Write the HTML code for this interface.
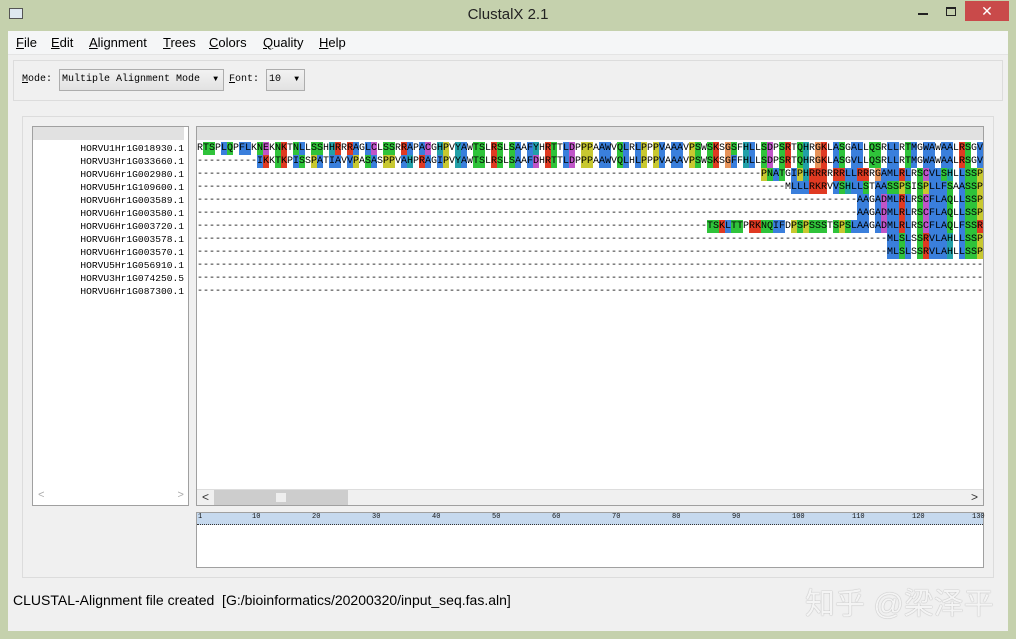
<!DOCTYPE html>
<html><head><meta charset="utf-8"><style>
*{margin:0;padding:0;box-sizing:border-box}
body{width:1016px;height:639px;background:#c5d1ad;position:relative;overflow:hidden;font-family:"Liberation Sans",sans-serif}
.abs{position:absolute}
#title{left:0;top:6px;width:1016px;text-align:center;font-size:15px;color:#222}
#client{left:8px;top:31px;width:1000px;height:600px;background:#f0f0f0}
#menu{left:8px;top:31px;width:1000px;height:24px;background:#f5f6f7;border-bottom:1px solid #e4e4e4;font-size:13px;color:#000}
#menu span{position:absolute;top:4px}
.mono{font-family:"Liberation Mono",monospace}
#grp{left:13px;top:60px;width:990px;height:41px;border:1px solid #dcdcdc;background:#f0f0f0}
.sel{border:1px solid #adadad;background:linear-gradient(#f2f2f2,#e2e2e2);height:22px;font-size:10px;padding:4px 2px;white-space:nowrap}
.arr{position:absolute;right:5px;top:5px;font-size:8px}
#frame{left:22px;top:116px;width:972px;height:462px;border:1px solid #dcdcdc}
.panel{background:#fff;border:1px solid #a0a0a0}
.hdr{position:absolute;left:0;top:0;right:0;height:13px;background:#e1e1e1}
.names div{position:absolute;right:4px;font-size:9.6px;font-family:"Liberation Mono",monospace;color:#000;line-height:13px}
#seq .row{position:absolute;left:0;height:13px;line-height:13px;font-family:"Liberation Mono",monospace;font-size:10px;white-space:pre;letter-spacing:0}
#seq .row span{display:inline-block;width:6px;text-align:center}
.b{background:#3a7fdc}.g{background:#2fc33a}.r{background:#e03a22}.o{background:#e8945a}.y{background:#c8c830}.c{background:#22a0a8}.m{background:#c055c8}
</style></head><body>
<div class="abs" style="left:9px;top:8px;width:14px;height:11px;border:1px solid #555;background:#dfe8f0"></div>
<div id="title" class="abs">ClustalX 2.1</div>
<div class="abs" style="left:918px;top:13px;width:10px;height:2px;background:#222"></div>
<div class="abs" style="left:946px;top:7px;width:10px;height:9px;border:1px solid #222;border-top-width:2px"></div>
<div class="abs" style="left:965px;top:1px;width:44px;height:20px;background:#c94a4a;color:#fff;text-align:center;font-size:14px;line-height:20px">✕</div>
<div id="client" class="abs"></div>
<div id="menu" class="abs">
<span style="left:8px"><u>F</u>ile</span><span style="left:43px"><u>E</u>dit</span><span style="left:81px"><u>A</u>lignment</span><span style="left:155px"><u>T</u>rees</span><span style="left:201px"><u>C</u>olors</span><span style="left:255px"><u>Q</u>uality</span><span style="left:311px"><u>H</u>elp</span>
</div>
<div id="grp" class="abs"></div>
<div class="abs mono" style="left:22px;top:74px;font-size:10px"><u>M</u>ode:</div>
<div class="abs sel mono" style="left:59px;top:69px;width:165px">Multiple Alignment Mode<span class="arr">▼</span></div>
<div class="abs mono" style="left:229px;top:74px;font-size:10px"><u>F</u>ont:</div>
<div class="abs sel mono" style="left:266px;top:69px;width:39px">10<span class="arr">▼</span></div>
<div id="frame" class="abs"></div>
<div class="abs panel names" style="left:32px;top:126px;width:157px;height:380px">
<div class="hdr"></div>
<div style="top:15px">HORVU1Hr1G018930.1</div><div style="top:28px">HORVU3Hr1G033660.1</div><div style="top:41px">HORVU6Hr1G002980.1</div><div style="top:54px">HORVU5Hr1G109600.1</div><div style="top:67px">HORVU6Hr1G003589.1</div><div style="top:80px">HORVU6Hr1G003580.1</div><div style="top:93px">HORVU6Hr1G003720.1</div><div style="top:106px">HORVU6Hr1G003578.1</div><div style="top:119px">HORVU6Hr1G003570.1</div><div style="top:132px">HORVU5Hr1G056910.1</div><div style="top:145px">HORVU3Hr1G074250.5</div><div style="top:158px">HORVU6Hr1G087300.1</div>
<div style="top:363px;left:5px;right:auto;color:#aaa;font-size:11px">&lt;</div><div style="top:363px;right:4px;color:#aaa;font-size:11px">&gt;</div>
</div>
<div class="abs panel" id="seq" style="left:196px;top:126px;width:788px;height:380px;overflow:hidden">
<div class="hdr"></div>
<div class="row" style="top:15px">RTSPLQPFLKNEKNKTNLLSSHHRRRAGLCLSSRRAPACGHPVYAWTSLRSLSAAFYHRTTLDPPPAAWVQLRLPPPVAAAVPSWSKSGSFHLLSDPSRTQHRGKLASGALLQSRLLRTMGWAWAALRSGV</div>
<div class="row" style="top:28px">----------IKKTKPISSPATIAVVPASASPPVAHPRAGIPVYAWTSLRSLSAAFDHRTTLDPPPAAWVQLHLPPPVAAAVPSWSKSGFFHLLSDPSRTQHRGKLASGVLLQSRLLRTMGWAWAALRSGV</div>
<div class="row" style="top:41px">----------------------------------------------------------------------------------------------PNATGIPHRRRRRRLLRRRGAMLRLRSCVLSHLLSSP</div>
<div class="row" style="top:54px">--------------------------------------------------------------------------------------------------MLLLRKRVVSHLLSTAASSPSISPLLFSAASSP</div>
<div class="row" style="top:67px">--------------------------------------------------------------------------------------------------------------AAGADMLRLRSCFLAQLLSSP</div>
<div class="row" style="top:80px">--------------------------------------------------------------------------------------------------------------AAGADMLRLRSCFLAQLLSSP</div>
<div class="row" style="top:93px">-------------------------------------------------------------------------------------TSKLTTPRKNQIFDPSPSSSTSPSLAAGADMLRLRSCFLAQLFSSR</div>
<div class="row" style="top:106px">-------------------------------------------------------------------------------------------------------------------MLSLSSRVLAHLLSSP</div>
<div class="row" style="top:119px">-------------------------------------------------------------------------------------------------------------------MLSLSSRVLAHLLSSP</div>
<div class="row" style="top:132px">-----------------------------------------------------------------------------------------------------------------------------------</div>
<div class="row" style="top:145px">-----------------------------------------------------------------------------------------------------------------------------------</div>
<div class="row" style="top:158px">-----------------------------------------------------------------------------------------------------------------------------------</div>
<div class="abs" style="left:0;top:362px;width:788px;height:17px;background:#f0f0f0;border-top:1px solid #ddd"></div>
<div class="abs" style="left:17px;top:363px;width:134px;height:15px;background:#cdcdcd"></div>
<div class="abs" style="left:79px;top:366px;width:10px;height:9px;background:#eee"></div>
<div class="abs" style="left:5px;top:363px;font-size:12px;color:#333">&lt;</div>
<div class="abs" style="left:774px;top:363px;font-size:12px;color:#333">&gt;</div>
</div>
<div class="abs panel" style="left:196px;top:512px;width:788px;height:56px">
<div class="abs" style="left:0;top:0;width:786px;height:12px;background:#c6d9ee;border-bottom:1px dotted #333"></div>
<div class="abs mono" id="ruler" style="left:0;top:0;font-size:7px;color:#111;white-space:pre"></div>
</div>
<div class="abs" style="left:13px;top:592px;font-size:14px;white-space:nowrap;color:#000">CLUSTAL-Alignment file created&nbsp; [G:/bioinformatics/20200320/input_seq.fas.aln]</div>
<div class="abs" style="left:805px;top:579px;font-size:30px;color:#f4f4f4;text-shadow:0 0 1px #888;font-family:'Liberation Sans','Noto Sans CJK SC',sans-serif;white-space:nowrap">知乎 @梁泽平</div>
<script>
var map={A:'b',I:'b',L:'b',M:'b',F:'b',W:'b',V:'b',K:'r',R:'r',S:'g',T:'g',N:'g',Q:'g',G:'o',P:'y',C:'m',H:'c',Y:'c',D:'m',E:'m'};
document.querySelectorAll('#seq .row').forEach(function(r,i){var t=r.textContent,h='';for(var k=0;k<t.length;k++){var ch=t[k],c=map[ch]||'';if(i<2&&((k*7+i*3)%3==0))c='';if(i>=2&&ch!='-'&&((k*5)%7==0))c='';h+='<span class="'+c+'">'+ch+'</span>';}r.innerHTML=h;});
var ru=document.getElementById('ruler'),s='';
for(var n=1;n<=131;n++){var x=3+(n-1)*6;if(n==1||n%10==0){s+='<span style="position:absolute;left:'+(x-2)+'px;top:0">'+n+'</span>';}}
ru.innerHTML=s;
</script>
</body></html>
